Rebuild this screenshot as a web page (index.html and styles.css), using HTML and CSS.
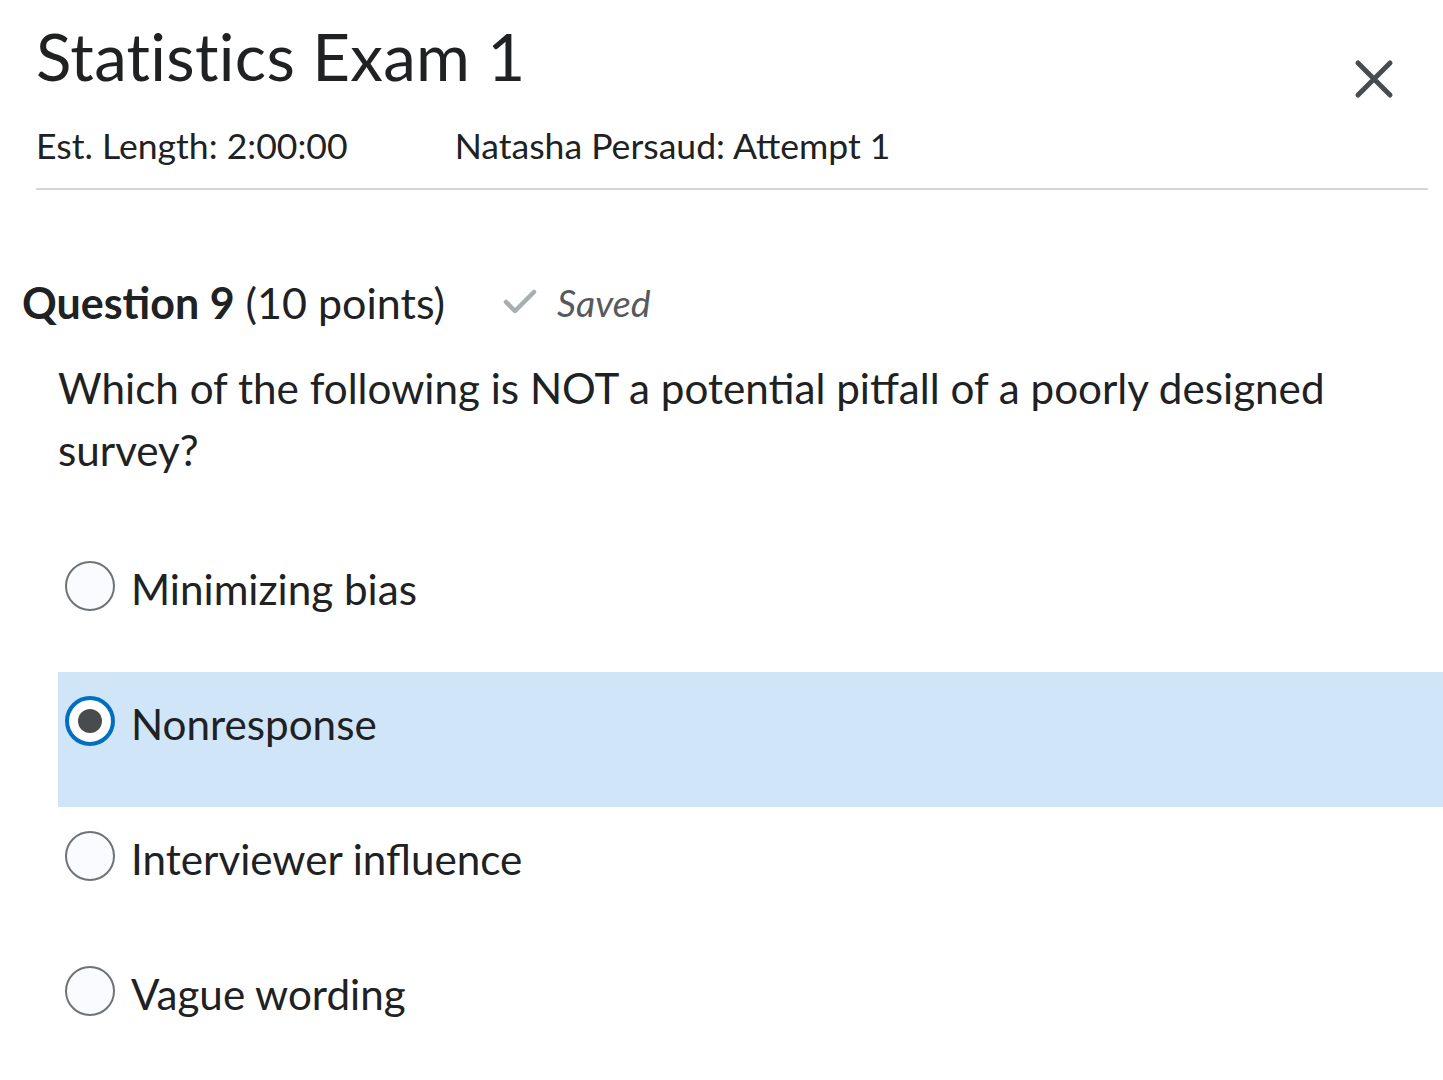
FILE: index.html
```html
<!DOCTYPE html>
<html lang="en">
<head>
<meta charset="utf-8">
<title>Statistics Exam 1</title>
<link rel="stylesheet" href="styles.css">
</head>
<body>
<header class="header">
  <div class="header-top">
    <h1 class="title">Statistics Exam 1</h1>
    <button class="close" aria-label="Close">
      <svg viewBox="0 0 40 40" width="40" height="40"><path d="M4 4 L36 36 M36 4 L4 36" stroke="#494c4e" stroke-width="5" stroke-linecap="round" fill="none"/></svg>
    </button>
  </div>
  <div class="meta">
    <span class="meta-item">Est. Length: 2:00:00</span>
    <span class="meta-item">Natasha Persaud: Attempt 1</span>
  </div>
</header>
<main class="question">
  <div class="q-head">
    <span class="q-title"><b>Question 9</b> (10 points)</span>
    <span class="saved">
      <svg viewBox="0 0 34 26" width="34" height="26"><path d="M3 13 L12 22 L31 3" stroke="#a8adb0" stroke-width="4.5" stroke-linecap="round" stroke-linejoin="round" fill="none"/></svg>
      <i>Saved</i>
    </span>
  </div>
  <p class="q-text">Which of the following is NOT a potential pitfall of a poorly designed survey?</p>
  <div class="options">
    <label class="option"><span class="radio"></span><span class="opt-text">Minimizing bias</span></label>
    <label class="option selected"><span class="radio checked"></span><span class="opt-text">Nonresponse</span></label>
    <label class="option"><span class="radio"></span><span class="opt-text">Interviewer influence</span></label>
    <label class="option"><span class="radio"></span><span class="opt-text">Vague wording</span></label>
  </div>
</main>
</body>
</html>
```
FILE: styles.css
```css
html, body {
  margin: 0;
  padding: 0;
  background: #ffffff;
}
body {
  font-family: Lato, "Open Sans", sans-serif;
  color: #202122;
  width: 1443px;
  overflow: hidden;
}
.header {
  padding: 14px 15px 0 36px;
}
.header-top {
  display: flex;
  justify-content: space-between;
  align-items: flex-start;
}
.title {
  margin: 0;
  font-weight: 400;
  font-size: 65.5px;
  line-height: 84px;
  letter-spacing: 0.3px;
}
.close {
  border: 0;
  background: none;
  padding: 0;
  margin: 45px 34px 0 0;
  width: 40px;
  height: 40px;
  display: flex;
}
.meta {
  display: flex;
  gap: 107px;
  font-size: 35.6px;
  line-height: 44px;
  padding: 25px 0 20px;
  border-bottom: 2px solid #d3d5d7;
}
.question {
  padding: 0 0 0 22px;
}
.q-head {
  display: flex;
  align-items: center;
  margin-top: 84px;
  height: 56px;
}
.q-title {
  font-size: 43px;
}
.q-title b {
  font-weight: 700;
}
.saved {
  display: flex;
  align-items: center;
  margin-left: 58px;
  gap: 20px;
  color: #565a5c;
  font-size: 37.5px;
}
.q-text {
  margin: 27px 0 0 36px;
  font-size: 42.2px;
  line-height: 62px;
  max-width: 1300px;
}
.options {
  margin: 56px 0 0 36px;
  display: flex;
  flex-direction: column;
}
.option {
  display: flex;
  align-items: flex-start;
  height: 135px;
  padding: 24px 0 0 7px;
  box-sizing: border-box;
  gap: 16px;
}
.option.selected {
  background: #d1e5f8;
}
.radio {
  width: 50px;
  height: 50px;
  border-radius: 50%;
  border: 2px solid #6e7376;
  background: #f9fbff;
  box-sizing: border-box;
  flex: none;
  margin-top: 0;
  position: relative;
}
.radio.checked {
  border: 4px solid #006fbf;
  background: #ffffff;
}
.radio.checked::after {
  content: "";
  position: absolute;
  left: 50%;
  top: 50%;
  width: 24px;
  height: 24px;
  margin: -12px 0 0 -12px;
  border-radius: 50%;
  background: #494c4e;
}
.opt-text {
  font-size: 42.2px;
  line-height: 52px;
  padding-top: 2px;
}
```
